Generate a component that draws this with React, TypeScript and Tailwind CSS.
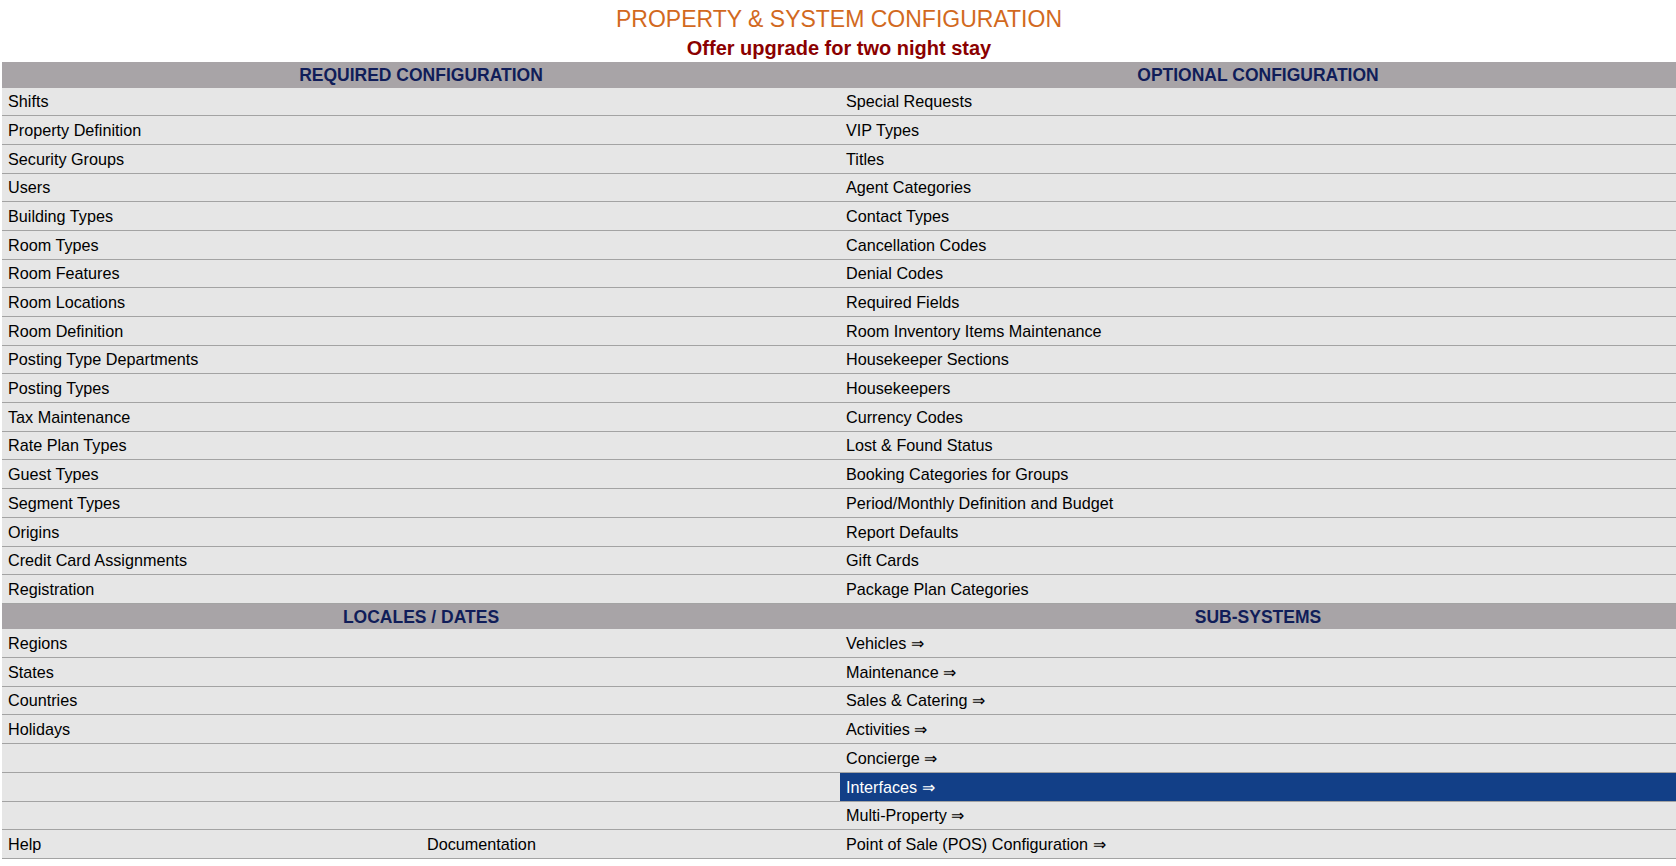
const required = [
  "Shifts",
  "Property Definition",
  "Security Groups",
  "Users",
  "Building Types",
  "Room Types",
  "Room Features",
  "Room Locations",
  "Room Definition",
  "Posting Type Departments",
  "Posting Types",
  "Tax Maintenance",
  "Rate Plan Types",
  "Guest Types",
  "Segment Types",
  "Origins",
  "Credit Card Assignments",
  "Registration",
];

const optional = [
  "Special Requests",
  "VIP Types",
  "Titles",
  "Agent Categories",
  "Contact Types",
  "Cancellation Codes",
  "Denial Codes",
  "Required Fields",
  "Room Inventory Items Maintenance",
  "Housekeeper Sections",
  "Housekeepers",
  "Currency Codes",
  "Lost & Found Status",
  "Booking Categories for Groups",
  "Period/Monthly Definition and Budget",
  "Report Defaults",
  "Gift Cards",
  "Package Plan Categories",
];

const locales = ["Regions", "States", "Countries", "Holidays", "", "", ""];

const subSystems = [
  "Vehicles",
  "Maintenance",
  "Sales & Catering",
  "Activities",
  "Concierge",
  "Interfaces",
  "Multi-Property",
  "Point of Sale (POS) Configuration",
];

function SectionHeader({ left, right }: { left: string; right: string }) {
  return (
    <div className="flex h-[25.5px] bg-[#a8a4a7] text-[17.5px] font-bold text-[#101d59]">
      <div className="flex w-[838px] items-center justify-center">{left}</div>
      <div className="flex flex-1 items-center justify-center">{right}</div>
    </div>
  );
}

function Cell({
  children,
  active,
  className = "",
}: {
  children?: React.ReactNode;
  active?: boolean;
  className?: string;
}) {
  return (
    <div
      className={`flex h-full items-center px-[6px] ${
        active ? "bg-[#123f87] text-white" : "text-black"
      } ${className}`}
    >
      {children}
    </div>
  );
}

function Row({
  left,
  right,
  active,
}: {
  left: React.ReactNode;
  right: React.ReactNode;
  active?: boolean;
}) {
  return (
    <div className="flex h-[28.7px] border-b-[1.5px] border-[#a3a3a3] bg-[#e6e6e6] text-[16.2px]">
      <div className="w-[838px]">{left}</div>
      <div className="flex-1">
        <Cell active={active}>{right}</Cell>
      </div>
    </div>
  );
}

export default function App() {
  return (
    <div
      className="min-h-screen bg-white pl-[2px]"
      style={{ fontFamily: '"Liberation Sans", Arial, sans-serif' }}
    >
      <div className="pt-[5px] text-center text-[23px] leading-[29px] text-[#d2691e]">
        PROPERTY &amp; SYSTEM CONFIGURATION
      </div>
      <div className="text-center text-[20px] font-bold leading-[28px] text-[#8b0000]">
        Offer upgrade for two night stay
      </div>

      <SectionHeader left="REQUIRED CONFIGURATION" right="OPTIONAL CONFIGURATION" />
      {required.map((r, i) => (
        <Row key={r} left={<Cell>{r}</Cell>} right={optional[i]} />
      ))}

      <SectionHeader left="LOCALES / DATES" right="SUB-SYSTEMS" />
      {subSystems.map((s, i) => (
        <Row
          key={s}
          active={s === "Interfaces"}
          left={
            i === 7 ? (
              <div className="flex h-full">
                <Cell className="w-[419px]">Help</Cell>
                <Cell>Documentation</Cell>
              </div>
            ) : (
              <Cell>{locales[i]}</Cell>
            )
          }
          right={<span>{s} ⇒</span>}
        />
      ))}
    </div>
  );
}
